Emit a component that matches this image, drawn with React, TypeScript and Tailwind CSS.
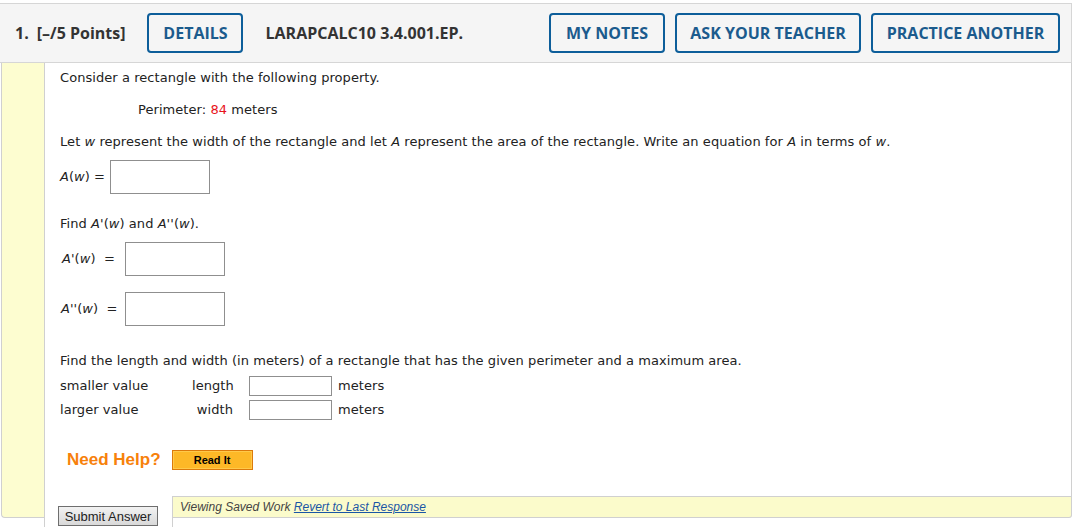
import React from "react";

const body = "font-['Verdana','DejaVu_Sans',sans-serif] text-[13px] leading-4 tracking-[0.06px] text-[#222]";

function HeaderButton({ label, width }: { label: string; width: string }) {
  return (
    <button
      className={`${width} h-[40px] rounded-[4px] border-2 border-[#0d5e9a] text-[16px] font-bold text-[#1b5b8d] bg-[#f5f5f5] flex items-center justify-center`}
    >
      {label}
    </button>
  );
}

function Box({ w, h }: { w: string; h: string }) {
  return <div className={`${w} ${h} border border-[#8f8f8f] bg-white`} />;
}

function V({ children }: { children: React.ReactNode }) {
  return <span className="italic">{children}</span>;
}

export default function App() {
  return (
    <div className="w-[1077px] h-[527px] bg-white overflow-hidden">
      {/* question header */}
      <div className="mt-[3px] w-[1072px] h-[60px] bg-[#f5f5f5] border-t border-b border-r border-[#d6d6d6] flex items-center font-['Open_Sans',sans-serif] text-[#333]">
        <span className="ml-[15px] text-[16px] font-bold">1.</span>
        <span className="ml-[8px] text-[16px] font-bold">[–/5 Points]</span>
        <div className="ml-[22px]">
          <HeaderButton label="DETAILS" width="w-[96px]" />
        </div>
        <span className="ml-[22px] text-[16px] font-bold">LARAPCALC10 3.4.001.EP.</span>
        <div className="ml-auto mr-[11px] flex gap-[10px]">
          <HeaderButton label="MY NOTES" width="w-[116px]" />
          <HeaderButton label="ASK YOUR TEACHER" width="w-[186px]" />
          <HeaderButton label="PRACTICE ANOTHER" width="w-[189px]" />
        </div>
      </div>

      {/* question body */}
      <div className="flex items-stretch h-[464px]">
        <div className="ml-[1px] w-[43px] mb-[9px] bg-[#fdfdd0] border-l border-b border-[#d0d0d0] rounded-bl-[4px]" />
        <div className="w-[1028px] border-l border-[#d0d0d0] flex flex-col">
          <div className={`flex-1 border-r border-[#d0d0d0] pl-[15px] pt-[7px] ${body}`}>
            <p>Consider a rectangle with the following property.</p>
            <p className="mt-4 ml-[78px]">
              Perimeter: <span className="text-[#e8131b]">84</span> meters
            </p>
            <p className="mt-4">
              Let <V>w</V> represent the width of the rectangle and let <V>A</V> represent the area of the rectangle. Write an equation for <V>A</V> in terms of <V>w</V>.
            </p>
            <div className="mt-[10px] flex items-center">
              <span className="w-[50px]">
                <V>A</V>(<V>w</V>) =
              </span>
              <Box w="w-[100px]" h="h-[34px]" />
            </div>
            <p className="mt-[22px]">
              Find <V>A</V>'(<V>w</V>) and <V>A</V>''(<V>w</V>).
            </p>
            <div className="mt-[10px] flex items-center">
              <span className="w-[65px] pl-[2px]">
                <V>A</V>'(<V>w</V>) &nbsp;=
              </span>
              <Box w="w-[100px]" h="h-[34px]" />
            </div>
            <div className="mt-[16px] flex items-center">
              <span className="w-[65px] pl-[1px]">
                <V>A</V>''(<V>w</V>) &nbsp;=
              </span>
              <Box w="w-[100px]" h="h-[34px]" />
            </div>
            <p className="mt-[27px]">
              Find the length and width (in meters) of a rectangle that has the given perimeter and a maximum area.
            </p>
            <div className="mt-[7px] flex items-center">
              <span className="w-[132px]">smaller value</span>
              <span className="w-[41px] text-right">length</span>
              <div className="ml-[16px]">
                <Box w="w-[83px]" h="h-[20px]" />
              </div>
              <span className="ml-[6px]">meters</span>
            </div>
            <div className="mt-[4px] flex items-center">
              <span className="w-[132px]">larger value</span>
              <span className="w-[41px] text-right">width</span>
              <div className="ml-[16px]">
                <Box w="w-[83px]" h="h-[20px]" />
              </div>
              <span className="ml-[6px]">meters</span>
            </div>
            <div className="mt-[30px] ml-[7px] flex items-center gap-[11px] font-['Liberation_Sans',Arial,sans-serif] tracking-normal">
              <span className="text-[17px] font-bold text-[#f7810b] leading-5">Need Help?</span>
              <button className="w-[81px] h-[20px] bg-[#fdb827] border border-[#dc7a0a] shadow-[inset_0_0_0_1px_#ffc94a] text-[11px] font-bold text-black leading-none">
                Read It
              </button>
            </div>
          </div>
          <div className="h-[31px] flex">
            <div className="w-[127px] flex items-end pl-[13px] pb-[1px]">
              <button className="w-[100px] h-[20px] bg-gradient-to-b from-[#f2f2f2] to-[#d9d9d9] border border-[#6e6e6e] font-['Liberation_Sans',Arial,sans-serif] text-[13px] text-[#222] leading-none">
                Submit Answer
              </button>
            </div>
            <div className="flex-1 border-l border-[#d0d0d0]">
              <div className="h-[22px] bg-[#fbfbcb] border-t border-b border-r border-[#d0d0d0] rounded-br-[3px] pl-[7px] flex items-center font-['Liberation_Sans',Arial,sans-serif] text-[12px] italic text-[#444]">
                Viewing Saved Work&nbsp;
                <a className="text-[#1a56a6] underline">Revert to Last Response</a>
              </div>
            </div>
          </div>
        </div>
      </div>
    </div>
  );
}
